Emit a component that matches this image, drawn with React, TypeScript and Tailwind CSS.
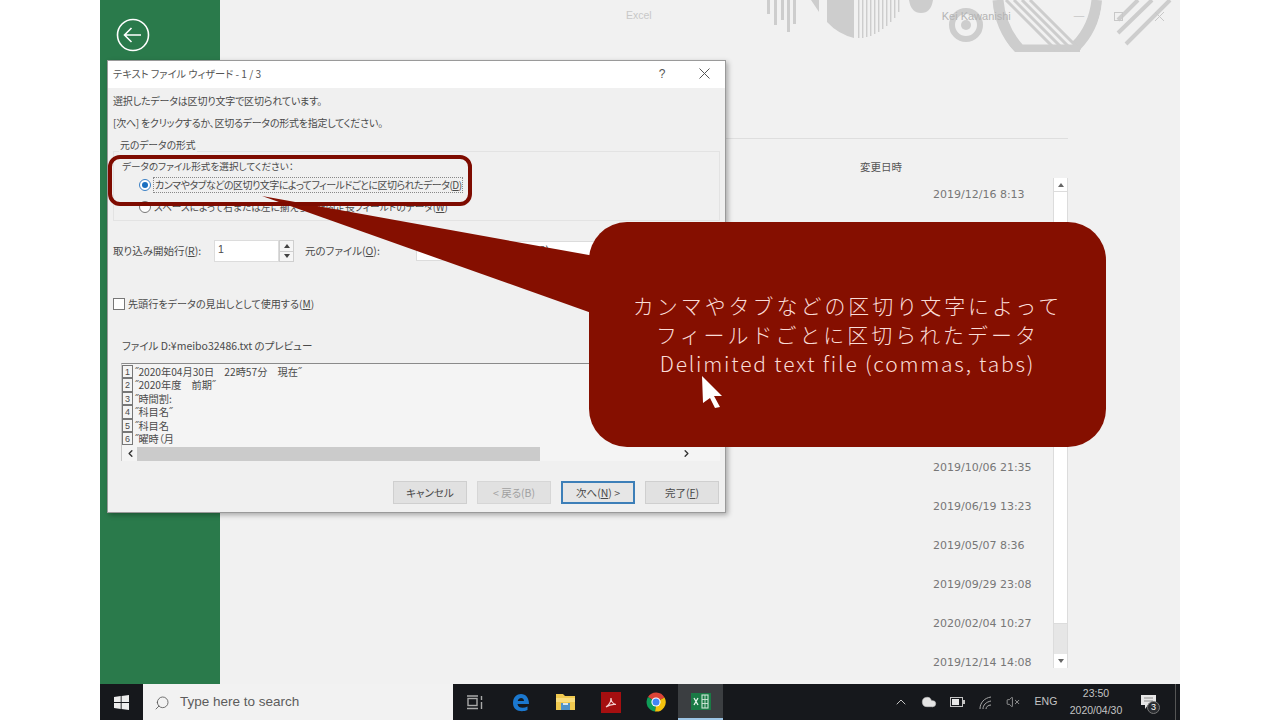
import React from "react";
import { Search, ChevronUp, Cloud, VolumeX, ChevronLeft, ChevronRight } from "lucide-react";

const JP = "font-['Noto_Sans_CJK_JP','Liberation_Sans',sans-serif] [font-feature-settings:'palt']";

const dates = [
  "2019/12/16 8:13", "", "", "", "", "", "",
  "2019/10/06 21:35",
  "2019/06/19 13:23",
  "2019/05/07 8:36",
  "2019/09/29 23:08",
  "2020/02/04 10:27",
  "2019/12/14 14:08",
];

const previewRows = [
  "\u02dd2020年04月30日　22時57分　現在\u02dd",
  "\u02dd2020年度　前期\u02dd",
  "\u02dd時間割:",
  "\u02dd科目名\u02dd",
  "\u02dd科目名",
  "\u02dd曜時（月",
];

function DecorPattern() {
  return (
    <svg className="absolute left-[530px] top-0" width="240" height="56" viewBox="750 0 240 56" fill="#cdcdcd" aria-hidden="true">
      {[767, 774, 781, 787, 793].map((x, i) => (
        <rect key={x} x={x} y={0} width="3" height={[14, 25, 20, 32, 24][i]} />
      ))}
      <path d="M811 0 L819 12 L819 0 Z" />
      <path d="M827 0 H854 V38 Q838 34 827 22 Z" />
      {[858, 862, 866, 870, 874, 878, 882, 886, 890, 894, 898].map((x, i) => (
        <rect key={x} x={x} y={0} width="1.4" height={[38, 38, 37, 36, 34, 32, 29, 26, 22, 18, 12][i]} />
      ))}
      <path d="M909 0 H933 Q931 13 921 13 Q911 13 909 0 Z" />
      <circle cx="966" cy="25" r="14" fill="none" stroke="#cdcdcd" strokeWidth="6" />
      <circle cx="966" cy="25" r="5" />
    </svg>
  );
}

function DecorRing() {
  return (
    <svg className="absolute left-[770px] top-0" width="190" height="56" viewBox="990 0 190 56" aria-hidden="true">
      <defs>
        <clipPath id="ring-inner">
          <path d="M992 0 Q994 32 1015 52 H1080 Q1100 32 1102 0 Z" />
        </clipPath>
      </defs>
      <g clipPath="url(#ring-inner)" stroke="#cdcdcd" fill="none">
        <path d="M1097 0 Q1094 28 1076 46" strokeWidth="11" />
        <path d="M998 0 Q1000 28 1020 50 H1080" strokeWidth="11" />
        <path d="M1006 0 L1060 54 M1014 0 L1068 54 M1022 0 L1074 52 M1030 0 L1080 50" strokeWidth="3" />
      </g>
      <path d="M1118 20 L1138 0 M1118 33 L1152 0 M1126 44 L1170 0" stroke="#cdcdcd" strokeWidth="4" />
    </svg>
  );
}

function WizardDialog() {
  return (
    <div className={`absolute left-[7px] top-[60px] w-[619px] h-[453px] flex flex-col bg-[#f0f0f0] border border-[#9a9a9a] shadow-[2px_2px_5px_rgba(0,0,0,0.3)] text-[#4a4a4a] ${JP}`}>
      <div className="h-[27px] shrink-0 flex items-center bg-white pl-[5px] pb-[2px] text-[10.2px] text-[#555]">
        <span className="flex-1">テキスト ファイル ウィザード - 1 / 3</span>
        <span className="w-[14px] text-[12px] text-center font-['Liberation_Sans',sans-serif]">?</span>
        <svg className="ml-[30px] mr-[15px]" width="11" height="11" viewBox="0 0 11 11" stroke="#555" strokeWidth="1">
          <path d="M0.5 0.5 L10.5 10.5 M10.5 0.5 L0.5 10.5" />
        </svg>
      </div>

      <div className="pl-[5px] text-[10.5px] leading-[16px]">
        <p className="mt-[5px] h-[16px] text-[10px] tracking-[-0.17px]">選択したデータは区切り文字で区切られています。</p>
        <p className="mt-[6px] h-[16px] text-[10px] tracking-[-0.25px]">[次へ] をクリックするか、区切るデータの形式を指定してください。</p>

        <div className="relative mt-[20px] mr-[5px] h-[70px] border border-[#e3e3e3]">
          <span className="absolute left-[5px] top-[-15px] bg-[#f0f0f0] px-[1px] text-[9.8px]">元のデータの形式</span>
          <p className="ml-[8px] mt-[6px] h-[16px] text-[9.6px]">データのファイル形式を選択してください：</p>
          <div className="flex items-center ml-[25px] mt-[3px] h-[16px]">
            <span className="w-[12px] h-[12px] rounded-full border border-[#3a7fc4] bg-white flex items-center justify-center">
              <span className="w-[6px] h-[6px] rounded-full bg-[#1a6fc0]" />
            </span>
            <span className="ml-[2px] px-[1px] w-[310px] whitespace-nowrap border border-dotted border-[#888] leading-[14px] text-[10px] tracking-[-0.52px]">カンマやタブなどの区切り文字によってフィールドごとに区切られたデータ(<u>D</u>)</span>
          </div>
          <div className="flex items-center ml-[25px] mt-[6px] h-[16px]">
            <span className="w-[12px] h-[12px] rounded-full border border-[#777] bg-white" />
            <span className="ml-[3px] whitespace-nowrap text-[9.7px]">スペースによって右または左に揃えられた固定長フィールドのデータ(<u>W</u>)</span>
          </div>
        </div>

        <div className="flex items-center mt-[19px] h-[22px]">
          <span className="w-[101px] whitespace-nowrap">取り込み開始行(<u>R</u>):</span>
          <span className="w-[65px] h-[22px] bg-white border border-[#dcdcdc] pl-[3px] font-['Liberation_Sans',sans-serif]">1</span>
          <span className="w-[15px] h-[22px] flex flex-col border border-[#cfcfcf] bg-[#f6f6f6]">
            <span className="flex-1 flex items-center justify-center border-b border-[#cfcfcf]">
              <span className="border-x-[3px] border-x-transparent border-b-[4px] border-b-[#444]" />
            </span>
            <span className="flex-1 flex items-center justify-center">
              <span className="border-x-[3px] border-x-transparent border-t-[4px] border-t-[#444]" />
            </span>
          </span>
          <span className="ml-[11px] w-[111px] whitespace-nowrap">元のファイル(<u>O</u>):</span>
          <span className="w-[180px] h-[20px] bg-white border border-[#dcdcdc] pl-[22px] whitespace-nowrap overflow-hidden">932 : 日本語 (シフト JIS)</span>
        </div>

        <div className="flex items-center mt-[34px] h-[16px]">
          <span className="w-[12px] h-[12px] bg-white border border-[#777]" />
          <span className="ml-[3px] text-[10.1px]">先頭行をデータの見出しとして使用する(<u>M</u>)</span>
        </div>

        <p className="ml-[9px] mt-[26px] h-[16px]">ファイル D:¥meibo32486.txt のプレビュー</p>

        <div className="ml-[8px] mr-[5px] mt-[9px] h-[98px] flex flex-col bg-[#f4f4f4] border-t border-[#8a8a8a] border-l border-l-[#c8c8c8]">
          <div className="h-[83px] overflow-hidden pt-[1px]">
            {previewRows.map((row, i) => (
              <div key={i} className="flex h-[13.4px] leading-[13px] text-[10.2px]">
                <span className="w-[11px] h-[13.4px] shrink-0 border border-[#777] text-center text-[9px] font-['Liberation_Sans',sans-serif]">{i + 1}</span>
                <span className={i === 5 ? "ml-[2px] w-[40px] overflow-hidden whitespace-nowrap" : "ml-[2px] whitespace-nowrap"}>{row}</span>
              </div>
            ))}
          </div>
          <div className="h-[15px] flex items-center text-[#333]">
            <ChevronLeft className="ml-[3px] w-[11px] h-[11px]" strokeWidth={3} />
            <span className="ml-[1px] w-[403px] h-[14px] bg-[#cbcbcb]" />
            <ChevronRight className="ml-[141px] w-[11px] h-[11px]" strokeWidth={3} />
          </div>
        </div>

        <div className="flex justify-end gap-[10px] mt-[20px] mr-[6px] text-[10.5px]">
          <span className="w-[74px] h-[23px] flex items-center justify-center bg-[#e1e1e1] border border-[#cfcfcf]">キャンセル</span>
          <span className="w-[74px] h-[23px] flex items-center justify-center bg-[#e1e1e1] border border-[#d6d6d6] text-[#a0a0a0]">&lt; 戻る(B)</span>
          <span className="w-[74px] h-[23px] flex items-center justify-center bg-[#e6e6e6] border-2 border-[#3d7fb8]">次へ(<u>N</u>) &gt;</span>
          <span className="w-[74px] h-[23px] flex items-center justify-center bg-[#e1e1e1] border border-[#cfcfcf]">完了(<u>F</u>)</span>
        </div>
      </div>
    </div>
  );
}

function TaskbarIcons() {
  return (
    <>
      <div className="w-[45px] flex items-center justify-center">
        <svg width="17" height="15" viewBox="0 0 17 15" fill="none" stroke="#a9a9a9" strokeWidth="1.4">
          <rect x="1" y="3.5" width="9" height="7" />
          <path d="M0 1 H11 M0 13.5 H11 M14.5 1 V5 M14.5 7 V14" />
        </svg>
      </div>
      <div className="w-[45px] flex items-center justify-center">
        <svg width="19" height="19" viewBox="0 0 19 19" fill="none">
          <path d="M2 10 C2 4 6 1 10 1 C15 1 18 5 18 11 H6.5 C7 15 12 16 16.5 13.5 V17 C11 19.5 2 18.5 2 10 Z M6.7 8 H13 C13 4 7.5 4 6.7 8 Z" fill="#1b78cf" fillRule="evenodd" />
        </svg>
      </div>
      <div className="w-[45px] flex items-center justify-center">
        <svg width="19" height="16" viewBox="0 0 19 16">
          <path d="M0 0 H7 L9 2 H19 V16 H0 Z" fill="#f0c94f" />
          <rect x="0" y="4" width="19" height="4" fill="#f8dc7c" />
          <rect x="5" y="9" width="9" height="7" fill="#4f93c9" />
          <rect x="7" y="9" width="5" height="2" fill="#d6e6f0" />
        </svg>
      </div>
      <div className="w-[45px] flex items-center justify-center">
        <svg width="20" height="21" viewBox="0 0 20 21">
          <rect width="20" height="21" fill="#a50f10" />
          <path d="M5 15 C8 13 10 9 10 6 C10 9 12 12 15 12.5 C12 12 8 13 5 15 Z" fill="none" stroke="#f4d0d0" strokeWidth="1.2" />
        </svg>
      </div>
      <div className="w-[45px] flex items-center justify-center">
        <svg width="20" height="20" viewBox="0 0 20 20">
          <path d="M10 10 L2 5 A9.5 9.5 0 0 1 18.5 5.5 Z" fill="#db4437" />
          <path d="M10 10 L18.5 5.5 A9.5 9.5 0 0 1 9 19.5 Z" fill="#f4c20d" />
          <path d="M10 10 L9 19.5 A9.5 9.5 0 0 1 2 5 Z" fill="#0f9d58" />
          <circle cx="10" cy="10" r="4.6" fill="#fff" />
          <circle cx="10" cy="10" r="3.5" fill="#4285f4" />
        </svg>
      </div>
      <div className="w-[45px] flex items-center justify-center bg-[#3b3e41] border-b-2 border-[#9cc4e4]">
        <svg width="20" height="17" viewBox="0 0 20 17">
          <rect width="20" height="17" fill="#1a7a45" />
          <path d="M3 5 L7 12 M7 5 L3 12" stroke="#e8f5ec" strokeWidth="1.3" />
          <rect x="11" y="2" width="6" height="13" fill="none" stroke="#cfe8d8" strokeWidth="1.1" />
          <path d="M11 6.5 H17 M11 10.5 H17 M14 2 V15" stroke="#cfe8d8" strokeWidth="0.9" />
        </svg>
      </div>
    </>
  );
}

function Tray() {
  return (
    <div className="ml-auto flex items-center h-full pr-[4px] text-[#c4c4c4] font-['Liberation_Sans',sans-serif]">
      <span className="w-[28px] flex justify-center"><ChevronUp className="w-[16px] h-[16px]" strokeWidth={1.5} /></span>
      <span className="w-[28px] flex justify-center"><Cloud className="w-[16px] h-[16px]" fill="#e4e4e4" strokeWidth={1} /></span>
      <span className="w-[28px] flex justify-center">
        <svg width="15" height="10" viewBox="0 0 15 10" fill="none">
          <rect x="0.5" y="0.5" width="12" height="9" stroke="#c4c4c4" />
          <rect x="2" y="2" width="7" height="6" fill="#e8e8e8" />
          <rect x="13" y="3" width="2" height="4" fill="#c4c4c4" />
        </svg>
      </span>
      <span className="w-[28px] flex justify-center">
        <svg width="13" height="13" viewBox="0 0 13 13" fill="none" stroke="#a8a8a8">
          <path d="M1 13 C1 7 5 2 12 1 M4 13 C4 9 7 6 12 5 M7 13 C7 11 9 9 12 9" />
        </svg>
      </span>
      <span className="w-[28px] flex justify-center"><VolumeX className="w-[14px] h-[14px]" strokeWidth={1.2} /></span>
      <span className="w-[38px] text-center text-[10.5px]">ENG</span>
      <span className="w-[62px] flex flex-col items-center text-[10.5px] leading-[17px]">
        <span>23:50</span>
        <span>2020/04/30</span>
      </span>
      <span className="relative w-[44px] flex justify-center">
        <svg width="15" height="14" viewBox="0 0 15 14" fill="#e6e6e6" className="mr-[2px]">
          <path d="M0 0 H15 V10 H7 L4 14 V10 H0 Z" />
          <path d="M3 3 H12 M3 6 H12" stroke="#777" strokeWidth="0.8" />
        </svg>
        <span className="absolute left-[20px] top-[6px] w-[13px] h-[13px] rounded-full bg-[#2a2c30] border border-[#777] flex items-center justify-center text-[9px] text-white">3</span>
      </span>
      <span className="ml-[4px] w-px h-[36px] bg-[#555]" />
    </div>
  );
}

export default function App() {
  return (
    <div className="w-[1280px] h-[720px] bg-white overflow-hidden relative">
      <div className="mx-[100px] w-[1080px] h-full flex flex-col">
        <div className="relative flex-1 flex">
          {/* backstage sidebar */}
          <div className="w-[120px] shrink-0 bg-[#2a7a4b] pl-[16px] pt-[18px]">
            <svg width="34" height="34" viewBox="0 0 34 34" fill="none" stroke="#fff" strokeWidth="1.6">
              <circle cx="17" cy="17" r="15.5" />
              <path d="M25 17 H9 M15.5 10 L8.5 17 L15.5 24" />
            </svg>
          </div>

          <div className="relative flex-1 bg-[#f1f1f1] flex flex-col font-['Liberation_Sans',sans-serif]">
            <DecorPattern />
            <DecorRing />
            <div className="relative h-[32px] shrink-0 flex items-center text-[10.5px] text-[#c8c8c8]">
              <span className="ml-[406px]">Excel</span>
              <span className="ml-[290px] text-[11px] text-[#b4b4b4]">Kei Kawanishi</span>
              <span className="ml-[63px]">—</span>
              <span className="ml-[30px] w-[9px] h-[9px] border border-[#c8c8c8]" />
              <svg className="ml-[32px]" width="9" height="9" viewBox="0 0 9 9" stroke="#c8c8c8">
                <path d="M0 0 L9 9 M9 0 L0 9" />
              </svg>
            </div>
            <div className="mt-[106px] ml-[278px] mr-[112px] h-px bg-[#dedede]" />
            <div className={`mt-[20px] ml-[640px] h-[16px] text-[10.5px] leading-[16px] text-[#555] ${JP}`}>変更日時</div>
            <div className="flex">
              <div className="ml-[713px] w-[120px] pt-[1px] text-[11px] text-[#777] font-['DejaVu_Sans',sans-serif]">
                {dates.map((date, i) => (
                  <div key={i} className="h-[39px] flex items-center whitespace-nowrap">{date}</div>
                ))}
              </div>
              <div className="mt-[3px] w-[15px] h-[490px] flex flex-col bg-[#e6e6e6] border-x border-[#dcdcdc]">
                <div className="h-[14px] bg-white flex items-center justify-center border-b border-[#dcdcdc]">
                  <span className="border-x-[3px] border-x-transparent border-b-[4px] border-b-[#666]" />
                </div>
                <div className="h-[432px] bg-white border-b border-[#dcdcdc]" />
                <div className="flex-1" />
                <div className="h-[14px] bg-white flex items-center justify-center">
                  <span className="border-x-[3px] border-x-transparent border-t-[4px] border-t-[#666]" />
                </div>
              </div>
            </div>
          </div>

          <WizardDialog />
        </div>

        <div className="h-[36px] shrink-0 flex bg-[#16181c]">
          <div className="w-[43px] flex items-center justify-center">
            <svg width="15" height="15" viewBox="0 0 15 15" fill="#ededed">
              <path d="M0 2 L6.7 1 V7 H0 Z M7.6 0.9 L15 0 V7 H7.6 Z M0 8 H6.7 V14 L0 13 Z M7.6 8 H15 V15 L7.6 14.1 Z" />
            </svg>
          </div>
          <div className="w-[310px] flex items-center bg-[#f2f2f2] text-[#5c5c5c] text-[13.5px] pt-[1px] font-['Liberation_Sans',sans-serif]">
            <Search className="ml-[11px] w-[16px] h-[16px] -scale-x-100" strokeWidth={1.3} />
            <span className="ml-[10px]">Type here to search</span>
          </div>
          <TaskbarIcons />
          <Tray />
        </div>
      </div>

      {/* annotation layer from the video, drawn over the screen */}
      <svg className="absolute left-0 top-0" width="1280" height="720" viewBox="0 0 1280 720" aria-hidden="true">
        <path d="M262 196 L600 257 L600 316 Z" fill="#850f00" />
        <rect x="110" y="157" width="360" height="47" rx="10" fill="none" stroke="#7e0b00" strokeWidth="4" />
      </svg>
      <div className="absolute left-[589px] top-[222px] w-[517px] h-[225px] rounded-[38px] bg-[#850f00] flex flex-col items-center justify-center text-[21px] font-light leading-[29px] tracking-[2.95px] text-[#f9dcd7] font-['Noto_Sans_CJK_JP','Liberation_Sans',sans-serif]">
        <span>カンマやタブなどの区切り文字によって</span>
        <span>フィールドごとに区切られたデータ</span>
        <span className="tracking-[1.8px]">Delimited text file (commas, tabs)</span>
      </div>
      <svg className="absolute left-[700px] top-[375px]" width="24" height="34" viewBox="0 0 24 34" aria-hidden="true">
        <path d="M2 1 L22 21 L14 21 L20 32 L15 33 L10 23 L3 28 Z" fill="#fff" />
      </svg>
    </div>
  );
}
